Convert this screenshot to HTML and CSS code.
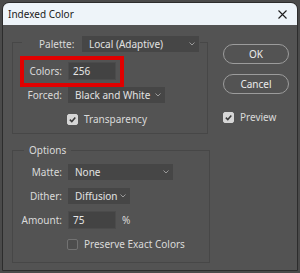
FILE: index.html
```html
<!DOCTYPE html>
<html>
<head>
<meta charset="utf-8">
<link rel="stylesheet" href="styles.css">
</head>
<body>
<div class="window">
  <div class="titlebar">
    <span class="title">Indexed Color</span>
    <svg class="close" width="9" height="9" viewBox="0 0 9 9"><path d="M0.5 0.5 L8.5 8.5 M8.5 0.5 L0.5 8.5" stroke="#1e1e1e" stroke-width="1.1" fill="none"/></svg>
  </div>
  <div class="content">
    <div class="left">
      <fieldset class="group g1">
        <legend class="palette-legend">
          <span class="plabel">Palette:</span>
          <div class="select w-palette"><span>Local (Adaptive)</span><svg class="chev" width="6" height="4" viewBox="0 0 6 4"><path d="M0.5 0.5 L3 3 L5.5 0.5" stroke="#9a9a9a" stroke-width="1" fill="none"/></svg></div>
        </legend>
        <div class="rows">
          <div class="row"><span class="label">Colors:</span><div class="input w-num">256</div></div>
          <div class="row"><span class="label">Forced:</span><div class="select w-forced"><span>Black and White</span><svg class="chev" width="6" height="4" viewBox="0 0 6 4"><path d="M0.5 0.5 L3 3 L5.5 0.5" stroke="#9a9a9a" stroke-width="1" fill="none"/></svg></div></div>
          <div class="row"><span class="label"></span><div class="check"><span class="box checked"><svg width="9" height="9" viewBox="0 0 9 9"><path d="M1.8 4.6 L3.8 6.6 L7.3 2.4" stroke="#3a3a3a" stroke-width="1.5" fill="none"/></svg></span><span>Transparency</span></div></div>
        </div>
      </fieldset>
      <fieldset class="group g2">
        <legend class="opt-legend">Options</legend>
        <div class="rows">
          <div class="row"><span class="label">Matte:</span><div class="select w-matte"><span>None</span><svg class="chev" width="6" height="4" viewBox="0 0 6 4"><path d="M0.5 0.5 L3 3 L5.5 0.5" stroke="#9a9a9a" stroke-width="1" fill="none"/></svg></div></div>
          <div class="row"><span class="label">Dither:</span><div class="select w-dither"><span>Diffusion</span><svg class="chev" width="6" height="4" viewBox="0 0 6 4"><path d="M0.5 0.5 L3 3 L5.5 0.5" stroke="#9a9a9a" stroke-width="1" fill="none"/></svg></div></div>
          <div class="row"><span class="label">Amount:</span><div class="input w-num">75</div><span class="pct">%</span></div>
          <div class="row"><span class="label"></span><div class="check"><span class="box"></span><span>Preserve Exact Colors</span></div></div>
        </div>
      </fieldset>
    </div>
    <div class="right">
      <div class="btn">OK</div>
      <div class="btn">Cancel</div>
      <div class="check preview"><span class="box checked"><svg width="9" height="9" viewBox="0 0 9 9"><path d="M1.8 4.6 L3.8 6.6 L7.3 2.4" stroke="#3a3a3a" stroke-width="1.5" fill="none"/></svg></span><span>Preview</span></div>
    </div>
  </div>
  <div class="highlight"></div>
</div>
</body>
</html>
```
FILE: styles.css
```css
* { box-sizing: border-box; }
html, body { margin: 0; padding: 0; }
body {
  background: #4a4a4a;
  width: 300px;
  height: 273px;
  overflow: hidden;
  font-family: "Noto Sans", "Open Sans", sans-serif;
  font-size: 10px;
  color: #dadada;
}
.window {
  position: relative;
  margin: 2px;
  width: 296px;
  height: 269px;
  border: 1px solid #2c2c2c;
  border-radius: 7px 7px 0 0;
  background: #535353;
  overflow: hidden;
}
.titlebar {
  height: 22px;
  background: #eef4f9;
  display: flex;
  align-items: center;
  justify-content: space-between;
  padding: 0 10px 0 5px;
}
.title { color: #1b1b1b; font-size: 10px; }
.content {
  display: flex;
  padding: 7px 0 0 9px;
}
.left { width: 198px; display: flex; flex-direction: column; }
.group {
  margin: 0;
  padding: 0;
  border: 1px solid #474747;
  min-width: 0;
}
.g1 { width: 196px; padding-bottom: 5px; }
.g2 { width: 198px; margin-top: 9px; padding-bottom: 9px; }
.palette-legend {
  margin-left: 9px;
  padding: 4px 0 0 0;
  display: flex;
  align-items: center;
  width: 178px;
}
.plabel { margin-left: 17px; width: 43px; }
.opt-legend {
  margin-left: 11px;
  padding: 0 5px;
  line-height: 14px;
}
.g1 .rows { padding-top: 10px; }
.g2 .rows { padding-top: 6px; }
.rows { display: flex; flex-direction: column; gap: 6px; }
.row { display: flex; align-items: center; height: 18px; }
.label { width: 49px; text-align: right; margin-right: 6px; }
.select {
  height: 16px;
  background: #464646;
  display: flex;
  align-items: center;
  justify-content: space-between;
  padding: 0 4px 0 7px;
  color: #e2e2e2;
}
.input {
  height: 18px;
  background: #434343;
  border: 1px solid #4b4b4b;
  padding: 0 4px;
  display: flex;
  align-items: center;
  color: #e6e6e6;
}
.w-palette { width: 117px; }
.w-forced { width: 97px; }
.w-matte { width: 105px; }
.w-dither { width: 62px; }
.w-num { width: 48px; }
.pct { margin-left: 6px; }
.check { display: flex; align-items: center; gap: 6px; margin-left: -1px; }
.box {
  width: 11px;
  height: 11px;
  border-radius: 2px;
  border: 1px solid #727272;
  background: #4d4d4d;
  display: flex;
  align-items: center;
  justify-content: center;
}
.box.checked { background: #d6d6d6; border-color: #d6d6d6; }
.right {
  margin-left: 13px;
  padding-top: 12px;
  width: 66px;
  display: flex;
  flex-direction: column;
  gap: 10px;
}
.btn {
  height: 20px;
  border: 1px solid #9c9c9c;
  border-radius: 10px;
  display: flex;
  align-items: center;
  justify-content: center;
  color: #ececec;
}
.preview { margin-top: 4px; height: 18px; margin-left: 0; }
.highlight {
  position: absolute;
  left: 17px;
  top: 53px;
  width: 104px;
  height: 31px;
  border: 4px solid #e00000;
}
```
